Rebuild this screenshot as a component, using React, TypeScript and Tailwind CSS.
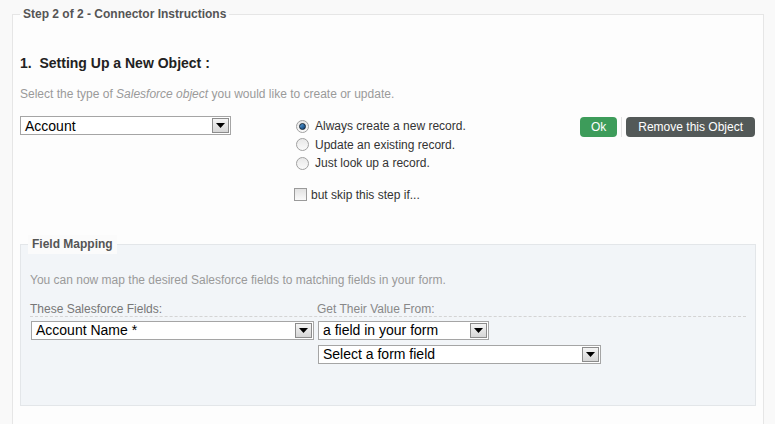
function Select({ label, width }: { label: string; width: string }) {
  return (
    <div className={`${width} h-[19px] border border-[#a5a5a5] bg-white flex items-center justify-between pl-[4px] pr-[1px]`}>
      <span className="text-[14px] leading-none text-black">{label}</span>
      <span className="w-[17px] h-[15px] border border-[#8c8c8c] bg-gradient-to-b from-[#f4f4f4] to-[#d6d6d6] flex items-center justify-center">
        <svg width="9" height="5" viewBox="0 0 9 5">
          <path d="M0 0h9L4.5 5z" fill="#000" />
        </svg>
      </span>
    </div>
  );
}

function Radio({ checked, label }: { checked?: boolean; label: string }) {
  return (
    <label className="flex items-center gap-[6px] h-[18.5px]">
      <span className="w-[13px] h-[13px] rounded-full border border-[#a0a0a0] bg-gradient-to-b from-[#e8e8e8] to-[#fafafa] flex items-center justify-center">
        {checked && <span className="w-[7px] h-[7px] rounded-full bg-gradient-to-br from-[#5aa3e0] to-[#0b3d70] border border-[#123]" />}
      </span>
      <span>{label}</span>
    </label>
  );
}

export default function App() {
  return (
    <div
      className="w-[775px] h-[424px] bg-[#f9f9f9] pt-[5px] pl-[12px] text-[12px] text-[#333] overflow-hidden"
      style={{ fontFamily: '"Liberation Sans", Arial, sans-serif' }}
    >
      <fieldset className="w-[751px] h-[430px] border border-[#e6e6e6] bg-[#fdfdfd] px-[7px] pt-0">
        <legend className="px-[3px] font-bold text-[12px] text-[#555]">Step 2 of 2 - Connector Instructions</legend>

        <h2 className="mt-[30px] text-[14px] font-bold text-[#222] whitespace-pre">1.  Setting Up a New Object :</h2>
        <p className="mt-[11px] text-[#9a9a9a]">
          Select the type of <em>Salesforce object</em> you would like to create or update.
        </p>

        <div className="mt-[13px] flex">
          <Select label="Account" width="w-[211px]" />
          <div className="ml-[65px] mt-[1px] flex flex-col">
            <Radio checked label="Always create a new record." />
            <Radio label="Update an existing record." />
            <Radio label="Just look up a record." />
            <label className="mt-[13px] -ml-[2px] flex items-center gap-[4px]">
              <span className="w-[13px] h-[13px] border border-[#9a9a9a] bg-gradient-to-b from-[#e2e2e2] to-[#fafafa]" />
              <span>but skip this step if...</span>
            </label>
          </div>
          <div className="ml-auto mr-[1px] flex items-start gap-[4px] pt-[1px]">
            <button className="h-[20px] px-[11px] rounded-[4px] bg-[#3d9c5a] text-white text-[12px]">Ok</button>
            <span className="w-px h-[20px] bg-[#e2e2e2]" />
            <button className="h-[20px] px-[12px] rounded-[4px] bg-[#535958] text-white text-[12px]">Remove this Object</button>
          </div>
        </div>

        <fieldset className="mt-[31px] w-[736px] h-[171px] border border-[#e3e6e9] bg-[#f2f5f8] px-[9px]">
          <legend className="-ml-[2px] px-[4px] bg-[#fbfbfb] font-bold text-[12px] text-[#555] h-[19px] flex items-center">Field Mapping</legend>
          <p className="mt-[17px] text-[#9a9a9a]">You can now map the desired Salesforce fields to matching fields in your form.</p>
          <div className="mt-[13px] flex border-b border-dashed border-[#d4d4d4] leading-[14px] pb-0">
            <span className="w-[287px] text-[#777]">These Salesforce Fields:</span>
            <span className="text-[#888]">Get Their Value From:</span>
          </div>
          <div className="mt-[4px] flex gap-[4px] pl-[1px]">
            <Select label="Account Name *" width="w-[283px]" />
            <div className="flex flex-col gap-[5px]">
              <Select label="a field in your form" width="w-[171px]" />
              <Select label="Select a form field" width="w-[283px]" />
            </div>
          </div>
        </fieldset>
      </fieldset>
    </div>
  );
}
